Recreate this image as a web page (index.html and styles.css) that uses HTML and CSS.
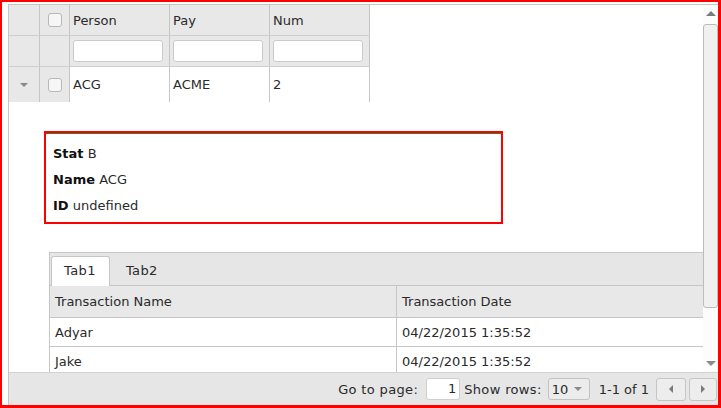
FILE: index.html
```html
<!DOCTYPE html>
<html>
<head>
<meta charset="utf-8">
<link rel="stylesheet" href="styles.css">
</head>
<body>
<div class="frame">
  <div class="grid">
    <div class="viewport">
      <div class="content">
        <div class="mtable">
          <div class="row head">
            <div class="cell c-exp"></div>
            <div class="cell c-chk"><span class="chk"></span></div>
            <div class="cell c-col">Person</div>
            <div class="cell c-col">Pay</div>
            <div class="cell c-col">Num</div>
          </div>
          <div class="row filter">
            <div class="cell c-exp"></div>
            <div class="cell c-chk"></div>
            <div class="cell c-col"><span class="finput"></span></div>
            <div class="cell c-col"><span class="finput"></span></div>
            <div class="cell c-col"><span class="finput"></span></div>
          </div>
          <div class="row data">
            <div class="cell c-exp"><span class="exp-arrow"></span></div>
            <div class="cell c-chk"><span class="chk"></span></div>
            <div class="cell c-col">ACG</div>
            <div class="cell c-col">ACME</div>
            <div class="cell c-col">2</div>
          </div>
        </div>

        <div class="detail">
          <div class="detail-inner">
            <p><b>Stat</b> B</p>
            <p><b>Name</b> ACG</p>
            <p><b>ID</b> undefined</p>
          </div>
        </div>

        <div class="tabs">
          <div class="tabstrip">
            <span class="tab active">Tab1</span>
            <span class="tab">Tab2</span>
          </div>
          <div class="ttable">
            <div class="trow thead">
              <div class="tcell first">Transaction Name</div>
              <div class="tcell">Transaction Date</div>
            </div>
            <div class="trow">
              <div class="tcell first">Adyar</div>
              <div class="tcell">04/22/2015 1:35:52</div>
            </div>
            <div class="trow">
              <div class="tcell first">Jake</div>
              <div class="tcell">04/22/2015 1:35:52</div>
            </div>
          </div>
        </div>
      </div>
      <div class="vscroll">
        <span class="sc-up"></span>
        <span class="sc-thumb"></span>
        <span class="sc-down"></span>
      </div>
    </div>
    <div class="footer">
      <span class="lbl goto">Go to page:</span>
      <span class="pginput">1</span>
      <span class="lbl rows">Show rows:</span>
      <span class="sel">10<span class="sel-arrow"></span></span>
      <span class="lbl count">1-1 of 1</span>
      <span class="pbtn prev"><span class="tri-l"></span></span>
      <span class="pbtn next"><span class="tri-r"></span></span>
    </div>
  </div>
</div>
</body>
</html>
```

FILE: styles.css
```css
* { box-sizing: border-box; }

body {
  margin: 0;
  font-family: "DejaVu Sans", Verdana, sans-serif;
  font-size: 13px;
  color: #2a2a2a;
  background: #fff;
}

.frame {
  width: 721px;
  height: 408px;
  border-style: solid;
  border-color: #f00;
  border-width: 2px 3px 3px 2px;
  padding: 2px 0 0 6px;
  background: #fff;
}

.grid {
  width: 710px;
  height: 401px;
  border-top: 1px solid #c6c6c6;
  border-left: 1px solid #c6c6c6;
  display: flex;
  flex-direction: column;
}

.viewport {
  height: 367px;
  display: flex;
  overflow: hidden;
}

.content {
  width: 694px;
  overflow: hidden;
}

/* master table */
.row {
  display: flex;
}
.row.head, .row.filter {
  height: 31px;
  border-bottom: 1px solid #cfcfcf;
  background: #e8e8e8;
  width: 361px;
}
.row.data {
  height: 35px;
  width: 361px;
}
.cell {
  border-right: 1px solid #c6c6c6;
  display: flex;
  align-items: center;
}
.c-exp { width: 31px; justify-content: center; }
.c-chk { width: 30px; justify-content: center; }
.c-col { width: 100px; padding-left: 3px; }
.row.data .c-exp, .row.data .c-chk { background: #e8e8e8; }

.chk {
  width: 14px;
  height: 14px;
  border: 1px solid #b8b8b8;
  border-radius: 3px;
  background: #f6f6f6;
}

.finput {
  width: 90px;
  height: 22px;
  background: #fff;
  border: 1px solid #cacaca;
  border-radius: 3px;
}

.exp-arrow {
  width: 0;
  height: 0;
  border-left: 4px solid transparent;
  border-right: 4px solid transparent;
  border-top: 4px solid #8a8a8a;
  margin-left: -1px;
}

/* detail */
.detail {
  margin: 29px 0 0 35px;
  width: 459px;
  height: 93px;
  border: 2px solid #f00;
}
.detail-inner {
  height: 100%;
  border-top: 1px solid #2f7f2f;
  padding: 7px 7px 0;
}
.detail p {
  margin: 0;
  height: 26px;
  line-height: 26px;
}
.detail b { font-weight: bold; color: #111; }

/* tabs */
.tabs {
  margin: 28px 0 0 40px;
  width: 680px;
  border: 1px solid #c6c6c6;
  border-right: none;
}
.tabstrip {
  height: 33px;
  background: #e6e6e6;
  border-bottom: 1px solid #c6c6c6;
  padding: 3px 1px 0;
  display: flex;
  align-items: flex-start;
}
.tab {
  height: 30px;
  padding: 0 13px 0 12px;
  line-height: 28px;
  border: 1px solid transparent;
  border-bottom: none;
  border-radius: 3px 3px 0 0;
  margin-right: 3px;
  letter-spacing: 0.4px;
}
.tab.active {
  background: #fff;
  border-color: #c6c6c6;
  position: relative;
}

.trow {
  display: flex;
  height: 29px;
  border-bottom: 1px solid #c6c6c6;
  background: #fff;
}
.trow.thead {
  height: 32px;
  background: #e8e8e8;
}
.tcell {
  display: flex;
  align-items: center;
  padding-left: 5px;
  flex: 1;
}
.tcell.first {
  flex: 0 0 347px;
  border-right: 1px solid #c6c6c6;
}

/* scrollbar */
.vscroll {
  width: 15px;
  height: 367px;
  background: #fcfcfc;
  display: flex;
  flex-direction: column;
  align-items: center;
}
.sc-up {
  margin-top: 6px;
  width: 0;
  height: 0;
  border-left: 5px solid transparent;
  border-right: 5px solid transparent;
  border-bottom: 5px solid #7a7a7a;
}
.sc-thumb {
  margin-top: 8px;
  width: 15px;
  height: 284px;
  border: 1px solid #bcbcbc;
  border-radius: 3px;
  background: #f0f0f0;
}
.sc-down {
  margin-top: 53px;
  width: 0;
  height: 0;
  border-left: 5px solid transparent;
  border-right: 5px solid transparent;
  border-top: 5px solid #8a8a8a;
}

/* footer */
.footer {
  height: 33px;
  background: #e6e6e6;
  border-top: 1px solid #d2d2d2;
  display: flex;
  align-items: center;
  justify-content: flex-end;
  padding-right: 1px;
}
.lbl { white-space: nowrap; }
.goto, .rows { letter-spacing: 0.35px; }
.pginput {
  margin-left: 8px;
  width: 34px;
  height: 22px;
  background: #fff;
  border: 1px solid #cfcfcf;
  border-radius: 3px;
  text-align: right;
  padding-right: 3px;
  line-height: 20px;
}
.rows { margin-left: 4px; }
.sel {
  margin-left: 6px;
  width: 42px;
  height: 22px;
  border: 1px solid #c2c2c2;
  border-radius: 3px;
  background: #ececec;
  display: flex;
  align-items: center;
  padding-left: 3px;
}
.sel-arrow {
  margin-left: 6px;
  width: 0;
  height: 0;
  border-left: 4px solid transparent;
  border-right: 4px solid transparent;
  border-top: 4px solid #8a8a8a;
}
.count { margin-left: 9px; }
.pbtn {
  height: 23px;
  border: 1px solid #c6c6c6;
  border-radius: 3px;
  background: #ededed;
  display: flex;
  align-items: center;
  justify-content: center;
}
.prev { width: 30px; margin-left: 7px; }
.next { width: 28px; margin-left: 3px; }
.tri-l {
  width: 0; height: 0;
  border-top: 4px solid transparent;
  border-bottom: 4px solid transparent;
  border-right: 4px solid #7a7a7a;
}
.tri-r {
  width: 0; height: 0;
  border-top: 4px solid transparent;
  border-bottom: 4px solid transparent;
  border-left: 4px solid #7a7a7a;
}
```
